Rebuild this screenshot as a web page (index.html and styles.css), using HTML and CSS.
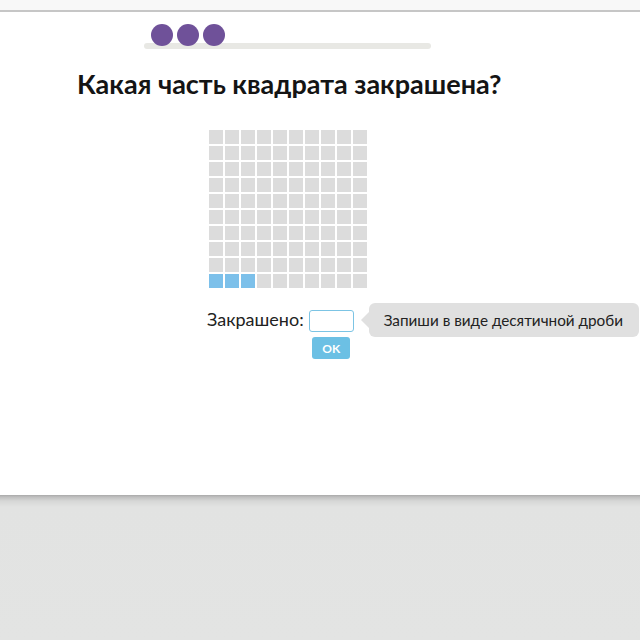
FILE: index.html
```html
<!DOCTYPE html>
<html lang="ru">
<head>
<meta charset="utf-8">
<link rel="stylesheet" href="styles.css">
</head>
<body>
<div class="topbar"></div>
<main class="page">
  <div class="progress">
    <div class="dots">
      <span class="dot"></span><span class="dot"></span><span class="dot"></span>
    </div>
    <div class="track"></div>
  </div>
  <h1 class="title">Какая часть квадрата закрашена?</h1>
  <div class="grid" id="grid"></div>
  <div class="answer">
    <span class="label">Закрашено:</span>
    <div class="field">
      <input class="input" type="text">
      <button class="ok">OK</button>
    </div>
    <div class="hint">Запиши в виде десятичной дроби</div>
  </div>
</main>
<div class="bottom"></div>
<script>
  var g = document.getElementById('grid');
  for (var r = 0; r < 10; r++) {
    for (var c = 0; c < 10; c++) {
      var d = document.createElement('span');
      d.className = 'cell' + (r === 9 && c < 3 ? ' on' : '');
      g.appendChild(d);
    }
  }
</script>
</body>
</html>
```

FILE: styles.css
```css
html, body {
  margin: 0;
  padding: 0;
}
body {
  font-family: Lato, "Noto Sans", sans-serif;
  color: #1e1e1e;
  background: #e3e4e3;
  width: 640px;
  height: 640px;
  overflow: hidden;
}
.topbar {
  height: 10px;
  background: #f8f8f8;
  border-bottom: 2px solid #c6c6c6;
}
.page {
  background: #ffffff;
  height: 483px;
  display: flex;
  flex-direction: column;
  align-items: flex-start;
}
.progress {
  margin: 12px 0 0 144px;
  width: 287px;
}
.dots {
  display: flex;
  gap: 4px;
  padding-left: 7px;
  position: relative;
  z-index: 1;
}
.dot {
  width: 22px;
  height: 22px;
  border-radius: 50%;
  background: #6f5199;
}
.track {
  height: 6px;
  margin-top: -3px;
  border-radius: 3px;
  background: #e8e8e4;
}
.title {
  margin: 19px 0 0 77px;
  font-size: 27px;
  font-weight: 700;
  line-height: 32px;
  color: #141414;
}
.grid {
  margin: 30px 0 0 209px;
  display: grid;
  grid-template-columns: repeat(10, 14px);
  grid-auto-rows: 14px;
  gap: 2px;
}
.cell {
  background: #dcdcdc;
}
.cell.on {
  background: #7cc0ea;
}
.answer {
  margin: 15px 0 0 207px;
  display: flex;
  align-items: flex-start;
}
.label {
  font-size: 18px;
  line-height: 22px;
  margin-top: 5px;
  color: #222;
}
.field {
  display: flex;
  flex-direction: column;
  align-items: center;
  margin-left: 5px;
  margin-top: 7px;
  gap: 5px;
}
.input {
  box-sizing: border-box;
  width: 45px;
  height: 22px;
  border: 1.5px solid #7cc4e4;
  border-radius: 3px;
  margin: 0;
  padding: 0;
  outline: none;
}
.ok {
  width: 38px;
  height: 22px;
  border: none;
  border-radius: 3px;
  background: #6cc0e4;
  color: #fff;
  font-family: Lato, sans-serif;
  font-weight: 700;
  font-size: 12px;
  padding: 0;
}
.hint {
  position: relative;
  margin-left: 15px;
  background: #e0e0e0;
  border-radius: 6px;
  padding: 0 16px 0 15px;
  height: 34px;
  line-height: 34px;
  font-size: 15.3px;
  color: #222;
  white-space: nowrap;
}
.hint::before {
  content: "";
  position: absolute;
  left: -8px;
  top: 9px;
  border-style: solid;
  border-width: 8px 8px 8px 0;
  border-color: transparent #e0e0e0 transparent transparent;
}
.bottom {
  height: 145px;
  background: linear-gradient(#a9a9a9 0, #bfbfbf 2px, #d6d7d6 6px, #e2e3e2 12px, #e3e4e3 100%);
}
```
